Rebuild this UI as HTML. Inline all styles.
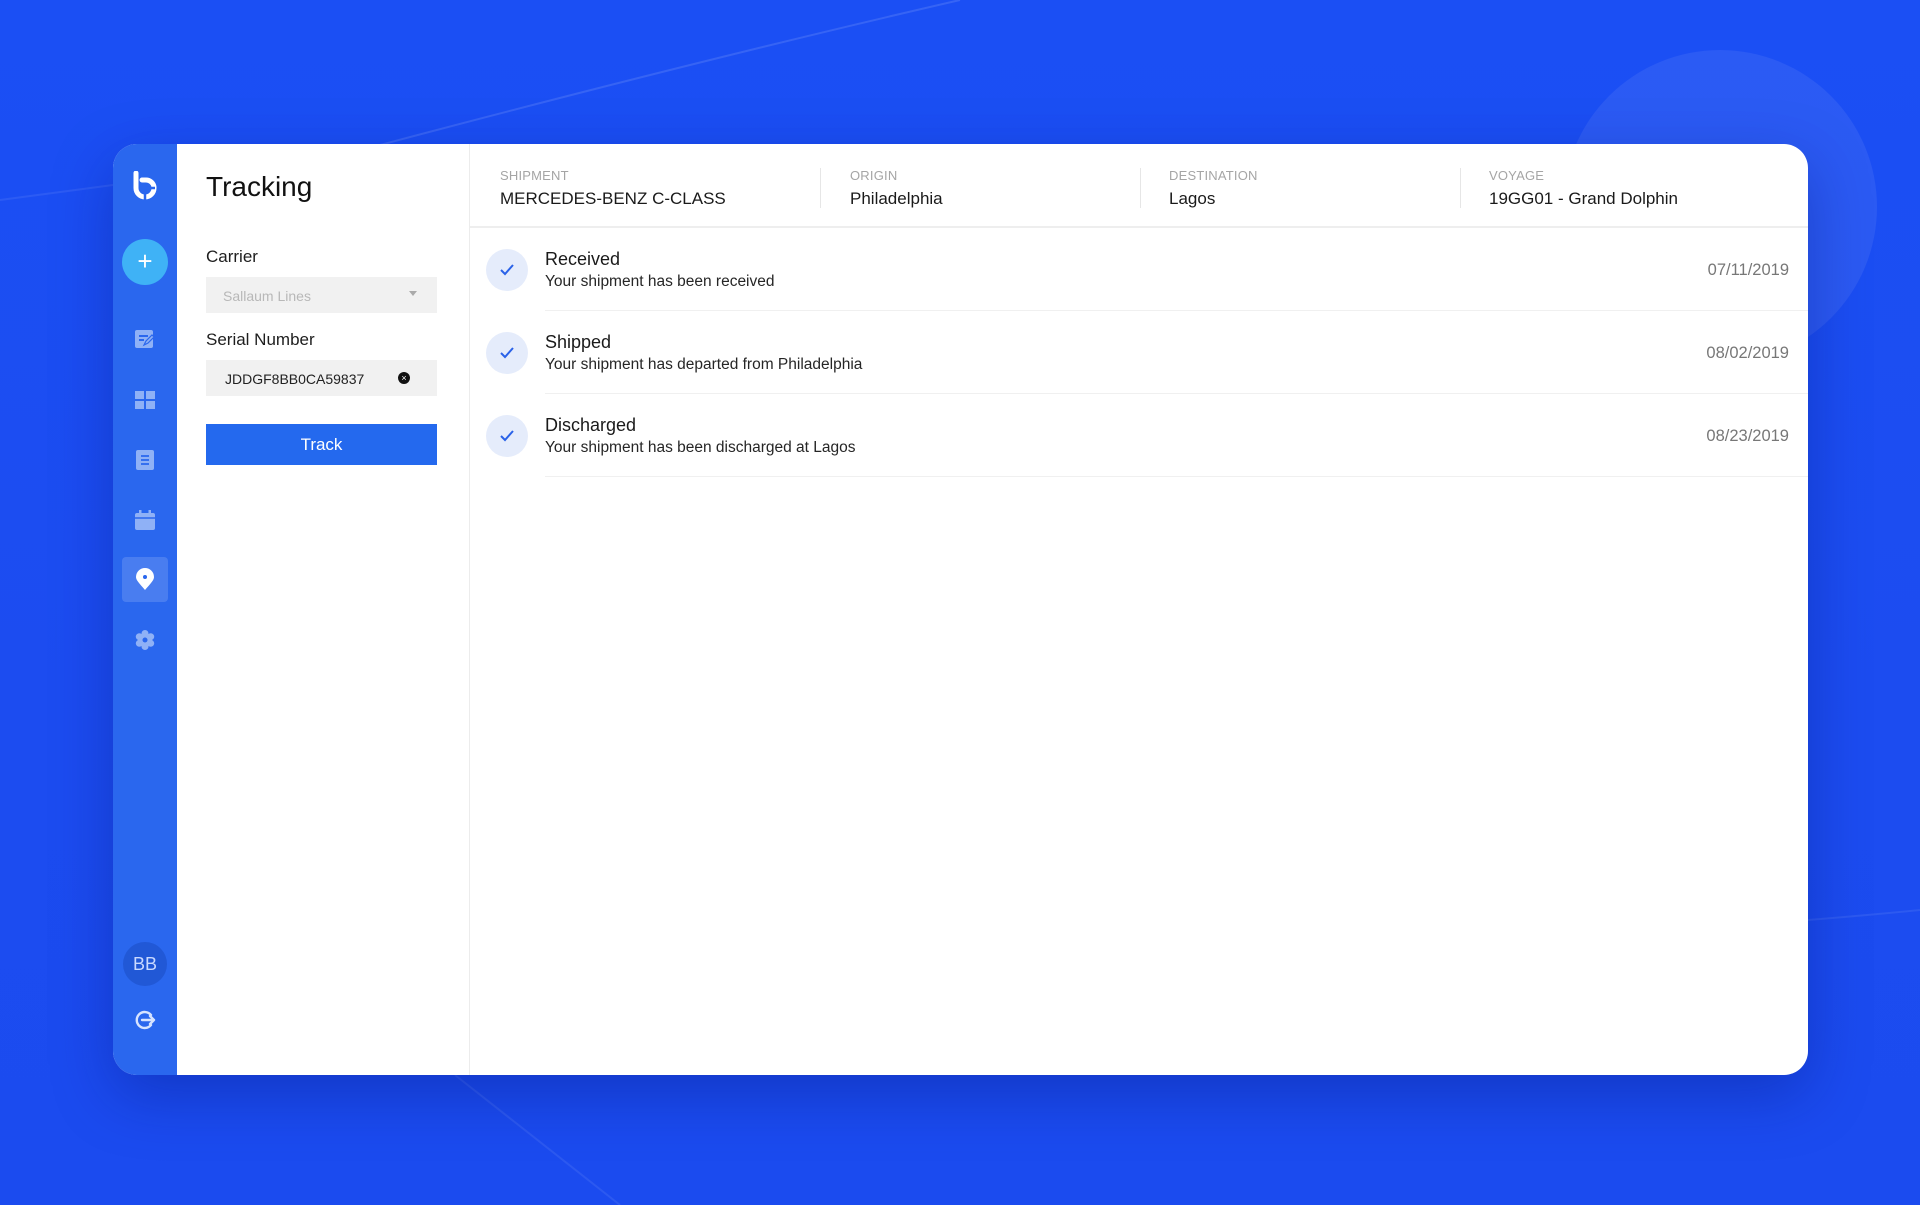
<!DOCTYPE html>
<html><head><meta charset="utf-8"><style>
*{box-sizing:border-box;margin:0;padding:0}
body{width:1920px;height:1205px;overflow:hidden;background:linear-gradient(180deg,#1b4ff4 0%,#1c4cf0 60%,#1b4bef 100%);font-family:"Liberation Sans",sans-serif;position:relative}
.bgc{position:absolute;left:1563px;top:50px;width:314px;height:314px;border-radius:50%;background:rgba(255,255,255,0.07)}
.card{position:absolute;left:113px;top:144px;width:1695px;height:931px;background:#fff;border-radius:24px;overflow:hidden;box-shadow:0 20px 60px rgba(0,20,120,0.35)}
.side{position:absolute;left:0;top:0;width:64px;height:100%;background:#2a67ee}
.ic{position:absolute;left:0;width:64px;display:flex;justify-content:center;align-items:center}
.panel{position:absolute;left:64px;top:0;width:293px;height:100%;border-right:1px solid #ececec}
.main{position:absolute;left:357px;top:0;right:0;height:100%}
.lbl{position:absolute;font-size:17px;color:#1e1e1e}
.box{position:absolute;left:29px;width:231px;height:36px;background:#f1f1f1;font-size:14px}
.hd{position:absolute;top:0;left:0;right:0;height:84px;border-bottom:2px solid #eeeeee}
.col{position:absolute;top:24px}
.col .k{font-size:13px;color:#a5a5a5;letter-spacing:.2px}
.col .v{font-size:17px;color:#1a1a1a;margin-top:6px}
.dv{position:absolute;top:24px;width:1px;height:40px;background:#e6e6e6}
.row{position:absolute;left:0;right:0;height:83px}
.chk{position:absolute;left:16px;top:21px;width:42px;height:42px;border-radius:50%;background:#e5ecfb;display:flex;align-items:center;justify-content:center}
.rt{position:absolute;left:75px;top:21px;font-size:18px;color:#1a1a1a}
.rs{position:absolute;left:75px;top:45px;font-size:15.5px;color:#262626}
.rd{position:absolute;right:19px;top:33px;font-size:16.5px;color:#777}
.rl{position:absolute;left:75px;right:0;bottom:0;height:1px;background:#f0f0f0}
</style></head><body>
<svg style="position:absolute;left:0;top:0" width="1920" height="1205"><path d="M380 145 Q700 60 960 0" stroke="rgba(255,255,255,0.12)" stroke-width="2" fill="none"/><path d="M0 200 L113 185" stroke="rgba(255,255,255,0.08)" stroke-width="2"/><path d="M455 1075 L620 1205" stroke="rgba(255,255,255,0.08)" stroke-width="2"/><path d="M1808 920 Q1870 915 1920 910" stroke="rgba(255,255,255,0.08)" stroke-width="2" fill="none"/></svg>
<div class="bgc"></div>
<div class="card">
 <div class="side">
  <div class="ic" style="top:26px;height:32px"><svg width="26" height="30" viewBox="0 0 26 30"><path d="M4 2v15a9 9 0 0 0 18 0v-1a8 8 0 0 0-8-7H10" stroke="#fff" stroke-width="5" fill="none" stroke-linecap="round"/><path d="M13 17h10M13 19v10" stroke="#2a67ee" stroke-width="2.5"/></svg></div>
  <div class="ic" style="top:95px;height:46px"><div style="width:46px;height:46px;border-radius:50%;background:#3fb2f6;color:#fff;font-size:26px;line-height:44px;text-align:center">+</div></div>
  <div class="ic" style="top:185px;height:22px"><svg width="20" height="20" viewBox="0 0 20 20"><rect x="0" y="0" width="18" height="18" rx="2" fill="#8fb1f6"/><path d="M4 6h9M4 10h5" stroke="#2a67ee" stroke-width="2"/><path d="M9 15l2-4 6-6 2 2-6 6z" fill="#8fb1f6" stroke="#2a67ee" stroke-width="1.2"/></svg></div>
  <div class="ic" style="top:245px;height:22px"><svg width="20" height="18" viewBox="0 0 20 18"><rect x="0" y="0" width="9" height="8" fill="#8fb1f6"/><rect x="11" y="0" width="9" height="8" fill="#8fb1f6"/><rect x="0" y="10" width="9" height="8" fill="#8fb1f6"/><rect x="11" y="10" width="9" height="8" fill="#8fb1f6"/></svg></div>
  <div class="ic" style="top:305px;height:22px"><svg width="18" height="20" viewBox="0 0 18 20"><rect width="18" height="20" rx="2" fill="#8fb1f6"/><path d="M5 6h8M5 10h8M5 14h8" stroke="#2a67ee" stroke-width="1.8"/></svg></div>
  <div class="ic" style="top:365px;height:22px"><svg width="20" height="20" viewBox="0 0 20 20"><rect x="0" y="3" width="20" height="17" rx="2" fill="#8fb1f6"/><rect x="4" y="0" width="2.5" height="5" fill="#8fb1f6"/><rect x="13.5" y="0" width="2.5" height="5" fill="#8fb1f6"/><path d="M0 8h20" stroke="#2a67ee" stroke-width="1.5"/></svg></div>
  <div style="position:absolute;left:9px;top:413px;width:46px;height:45px;border-radius:4px;background:rgba(255,255,255,0.15)"></div>
  <div class="ic" style="top:424px;height:22px"><svg width="18" height="22" viewBox="0 0 18 22"><path d="M9 22C3 15 0 12 0 9a9 9 0 0 1 18 0c0 3-3 6-9 13z" fill="#fff"/><circle cx="9" cy="9" r="2" fill="#2a67ee"/></svg></div>
  <div class="ic" style="top:485px;height:22px"><svg width="20" height="20" viewBox="0 0 20 20"><g fill="#8fb1f6"><circle cx="10" cy="10" r="7"/><circle cx="10" cy="3.5" r="3.5"/><circle cx="10" cy="16.5" r="3.5"/><circle cx="4.3" cy="6.7" r="3.5"/><circle cx="15.7" cy="6.7" r="3.5"/><circle cx="4.3" cy="13.3" r="3.5"/><circle cx="15.7" cy="13.3" r="3.5"/></g><circle cx="10" cy="10" r="2.5" fill="#2a67ee"/></svg></div>
  <div class="ic" style="top:798px;height:44px"><div style="width:44px;height:44px;border-radius:50%;background:#2158d6;color:#c9d9ff;font-size:18px;line-height:44px;text-align:center">BB</div></div>
  <div class="ic" style="top:864px;height:24px"><svg width="22" height="22" viewBox="0 0 22 22"><path d="M17 6A8 8 0 1 0 17 16" stroke="#d6e3ff" stroke-width="2.4" fill="none" stroke-linecap="round"/><path d="M8 11h12M16 7l4 4-4 4" stroke="#d6e3ff" stroke-width="2.4" fill="none" stroke-linecap="round" stroke-linejoin="round"/></svg></div>
 </div>
 <div class="panel">
  <div style="position:absolute;left:29px;top:27px;font-size:28px;color:#111">Tracking</div>
  <div class="lbl" style="left:29px;top:103px">Carrier</div>
  <div class="box" style="top:133px;color:#b8b8b8;padding:11px 0 0 17px">Sallaum Lines<span style="position:absolute;right:20px;top:14px;width:0;height:0;border-left:4px solid transparent;border-right:4px solid transparent;border-top:5px solid #aaa"></span></div>
  <div class="lbl" style="left:29px;top:186px">Serial Number</div>
  <div class="box" style="top:216px;color:#222;padding:11px 0 0 19px">JDDGF8BB0CA59837<span style="position:absolute;right:27px;top:12px;width:12px;height:12px;border-radius:50%;background:#111;color:#fff;font-size:9px;line-height:12px;text-align:center">×</span></div>
  <div style="position:absolute;left:29px;top:280px;width:231px;height:41px;background:#2469ee;color:#fff;font-size:17px;text-align:center;line-height:41px">Track</div>
 </div>
 <div class="main">
  <div class="hd">
   <div class="col" style="left:30px"><div class="k">SHIPMENT</div><div class="v">MERCEDES-BENZ C-CLASS</div></div>
   <div class="dv" style="left:350px"></div>
   <div class="col" style="left:380px"><div class="k">ORIGIN</div><div class="v">Philadelphia</div></div>
   <div class="dv" style="left:670px"></div>
   <div class="col" style="left:699px"><div class="k">DESTINATION</div><div class="v">Lagos</div></div>
   <div class="dv" style="left:990px"></div>
   <div class="col" style="left:1019px"><div class="k">VOYAGE</div><div class="v">19GG01 - Grand Dolphin</div></div>
  </div>
  <div class="row" style="top:84px"><div class="chk"><svg width="16" height="14" viewBox="0 0 16 14"><path d="M2 7l4 4 8-9" stroke="#2a62e8" stroke-width="2" fill="none"/></svg></div><div class="rt">Received</div><div class="rs">Your shipment has been received</div><div class="rd">07/11/2019</div><div class="rl"></div></div>
  <div class="row" style="top:167px"><div class="chk"><svg width="16" height="14" viewBox="0 0 16 14"><path d="M2 7l4 4 8-9" stroke="#2a62e8" stroke-width="2" fill="none"/></svg></div><div class="rt">Shipped</div><div class="rs">Your shipment has departed from Philadelphia</div><div class="rd">08/02/2019</div><div class="rl"></div></div>
  <div class="row" style="top:250px"><div class="chk"><svg width="16" height="14" viewBox="0 0 16 14"><path d="M2 7l4 4 8-9" stroke="#2a62e8" stroke-width="2" fill="none"/></svg></div><div class="rt">Discharged</div><div class="rs">Your shipment has been discharged at Lagos</div><div class="rd">08/23/2019</div><div class="rl"></div></div>
 </div>
</div>
</body></html>
